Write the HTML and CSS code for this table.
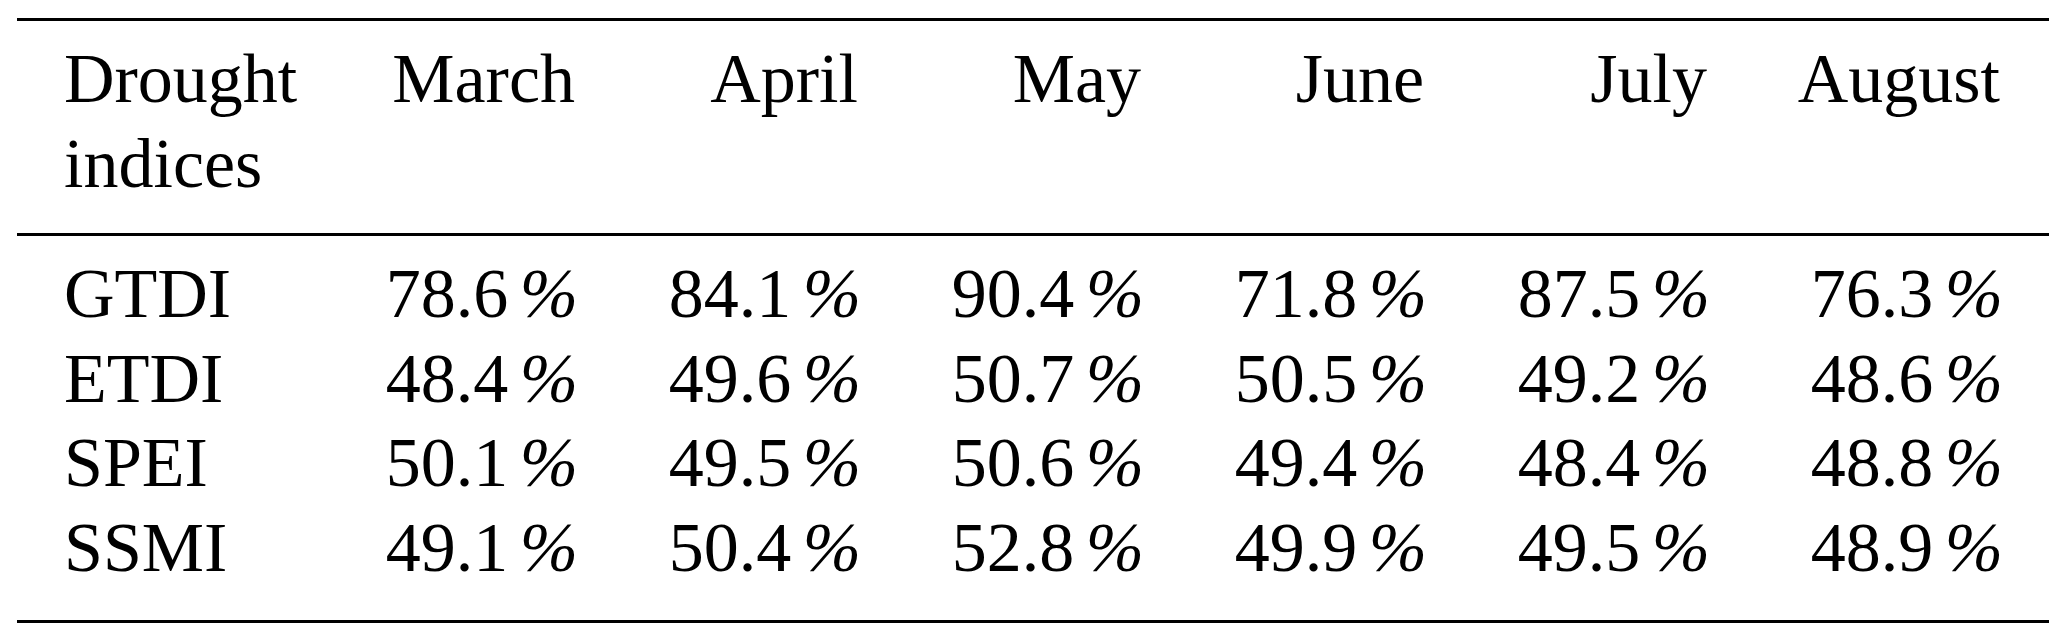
FILE: index.html
```html
<!DOCTYPE html>
<html lang="en">
<head>
<meta charset="utf-8">
<title>Drought indices</title>
<link rel="stylesheet" href="styles.css">
</head>
<body>
<div class="tbl">
  <div class="row head">
    <div class="cell first">Drought indices</div>
    <div class="cell num">March</div>
    <div class="cell num">April</div>
    <div class="cell num">May</div>
    <div class="cell num">June</div>
    <div class="cell num">July</div>
    <div class="cell num last">August</div>
  </div>
  <div class="tbody">
    <div class="row">
      <div class="cell first">GTDI</div>
      <div class="cell num val">78.6 <span class="pct">%</span></div>
      <div class="cell num val">84.1 <span class="pct">%</span></div>
      <div class="cell num val">90.4 <span class="pct">%</span></div>
      <div class="cell num val">71.8 <span class="pct">%</span></div>
      <div class="cell num val">87.5 <span class="pct">%</span></div>
      <div class="cell num val last">76.3 <span class="pct">%</span></div>
    </div>
    <div class="row">
      <div class="cell first">ETDI</div>
      <div class="cell num val">48.4 <span class="pct">%</span></div>
      <div class="cell num val">49.6 <span class="pct">%</span></div>
      <div class="cell num val">50.7 <span class="pct">%</span></div>
      <div class="cell num val">50.5 <span class="pct">%</span></div>
      <div class="cell num val">49.2 <span class="pct">%</span></div>
      <div class="cell num val last">48.6 <span class="pct">%</span></div>
    </div>
    <div class="row">
      <div class="cell first">SPEI</div>
      <div class="cell num val">50.1 <span class="pct">%</span></div>
      <div class="cell num val">49.5 <span class="pct">%</span></div>
      <div class="cell num val">50.6 <span class="pct">%</span></div>
      <div class="cell num val">49.4 <span class="pct">%</span></div>
      <div class="cell num val">48.4 <span class="pct">%</span></div>
      <div class="cell num val last">48.8 <span class="pct">%</span></div>
    </div>
    <div class="row">
      <div class="cell first">SSMI</div>
      <div class="cell num val">49.1 <span class="pct">%</span></div>
      <div class="cell num val">50.4 <span class="pct">%</span></div>
      <div class="cell num val">52.8 <span class="pct">%</span></div>
      <div class="cell num val">49.9 <span class="pct">%</span></div>
      <div class="cell num val">49.5 <span class="pct">%</span></div>
      <div class="cell num val last">48.9 <span class="pct">%</span></div>
    </div>
  </div>
</div>
</body>
</html>
```
FILE: styles.css
```css
html, body {
  margin: 0;
  padding: 0;
  background: #ffffff;
}

body {
  padding-top: 18px;
  font-family: "Liberation Serif", "Times New Roman", serif;
  font-size: 70px;
  color: #000000;
}

.tbl {
  margin-left: 17px;
  width: 2032px;
  border-top: 3px solid #000000;
  border-bottom: 3px solid #000000;
}

.row {
  display: grid;
  grid-template-columns: 300px 258px 283px 283px 283px 283px 342px;
  line-height: 84.67px;
}

.head {
  line-height: 85px;
  padding-top: 15px;
  padding-bottom: 27px;
  border-bottom: 3px solid #000000;
}

.tbody {
  padding-top: 16px;
  padding-bottom: 29px;
}

.cell {
  box-sizing: border-box;
  white-space: nowrap;
}

.first {
  padding-left: 47px;
  text-align: left;
  white-space: normal;
}

.num {
  text-align: right;
}

.val {
  word-spacing: -6px;
}

.pct {
  font-style: italic;
  margin-right: -3px;
}

.last {
  padding-right: 49px;
}
```
